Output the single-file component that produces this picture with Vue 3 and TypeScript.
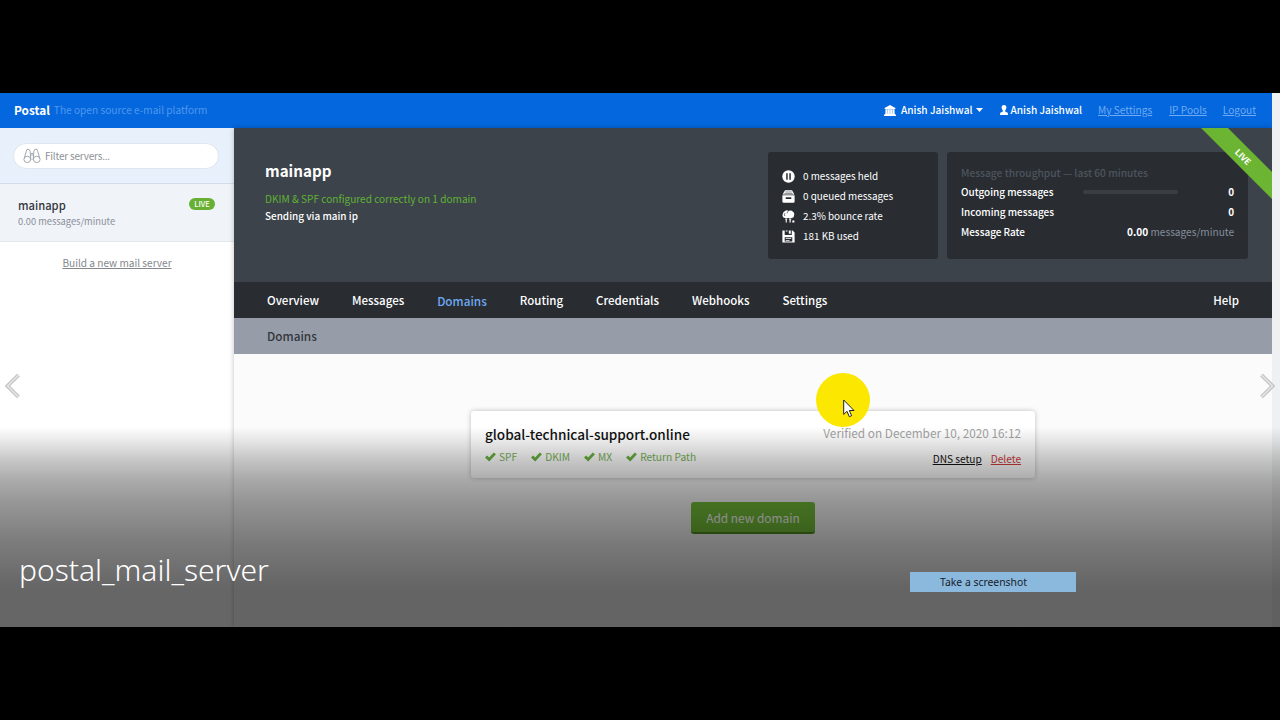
<script setup lang="ts">
const nav: { label: string; active?: boolean }[] = [
  { label: 'Overview' },
  { label: 'Messages' },
  { label: 'Domains', active: true },
  { label: 'Routing' },
  { label: 'Credentials' },
  { label: 'Webhooks' },
  { label: 'Settings' },
]
const checks: string[] = ['SPF', 'DKIM', 'MX', 'Return Path']
</script>

<template>
  <div class="screen">
    <div class="stage">
      <div class="app">
        <header class="topbar">
          <div class="brand"><b>Postal</b><span>The open source e-mail platform</span></div>
          <div class="user">
            <svg class="bank" viewBox="0 0 12 11" width="12" height="11"><path fill="#fff" d="M6 0L11.4 2.9V4H.6V2.9ZM1.6 4.5H3.2V8.3H1.6ZM4 4.5H5.5V8.3H4ZM6.4 4.5H7.9V8.3H6.4ZM8.8 4.5H10.4V8.3H8.8ZM1 8.6H11V9.4H12V11H0V9.4H1Z" /><path fill="#fff" opacity=".6" d="M1.5 4H10.5V9H1.5Z" /></svg>
            <span>Anish Jaishwal</span>
            <svg class="caret" viewBox="0 0 7 4" width="7" height="4"><path fill="#fff" d="M0 0H7L3.5 4Z" /></svg>
            <svg class="person" viewBox="0 0 8 10" width="8" height="10"><path fill="#fff" d="M4 0C5.6 0 6.5 1.1 6.4 2.6C6.3 3.8 5.8 4.7 5.3 5.2V6.8L7.4 7.6Q8 7.9 8 10H0Q0 7.9 .6 7.6L2.7 6.8V5.2C2.2 4.7 1.7 3.8 1.6 2.6C1.5 1.1 2.4 0 4 0Z" /></svg>
            <span>Anish Jaishwal</span>
            <a>My Settings</a>
            <a class="pools">IP Pools</a>
            <a>Logout</a>
          </div>
        </header>
        <div class="body">
          <aside class="side">
            <div class="search">
              <div class="field">
                <svg viewBox="0 0 18 16" width="18" height="16" fill="none" stroke="#a3a8ae" stroke-width="1"><path d="M3.3 3.2Q3.5 1.2 5 1.2T7.1 3.2L7.9 12M3.3 3.2L1.2 10.5M10.9 3.2Q11.1 1.2 12.8 1.2T14.7 3.2L16.8 10.5M10.9 3.2L10.1 12M8 5.5H10M8 7H10" /><ellipse cx="4.3" cy="11.4" rx="3.4" ry="3.1" /><ellipse cx="13.7" cy="11.4" rx="3.4" ry="3.1" /></svg>
                <span>Filter servers...</span>
              </div>
            </div>
            <div class="server">
              <div>
                <div class="sname">mainapp</div>
                <div class="srate">0.00 messages/minute</div>
              </div>
              <span class="badge">LIVE</span>
            </div>
            <a class="build">Build a new mail server</a>
          </aside>
          <main class="main">
            <section class="hero">
              <div class="info">
                <h1>mainapp</h1>
                <p class="ok">DKIM &amp; SPF configured correctly on 1 domain</p>
                <p class="via">Sending via main ip</p>
              </div>
              <div class="panel stats">
                <div class="stat">
                  <svg viewBox="0 0 13 13" width="13" height="13"><circle cx="6.5" cy="6.5" r="6.2" fill="#fff" /><path fill="#292d32" d="M4.2 3.3H5.7V9.7H4.2ZM7.3 3.3H8.8V9.7H7.3Z" /></svg>
                  <span>0 messages held</span>
                </div>
                <div class="stat">
                  <svg viewBox="0 0 13 13" width="13" height="13" fill="#fff"><path d="M3 .3H10L12.4 4.6H.6Z" /><path fill="#292d32" d="M3.2 1.7H9.8V2.3H3.2ZM2.4 3.2H10.6V3.8H2.4Z" /><path fill-rule="evenodd" d="M.4 5.2H12.6V11.5Q12.6 12.7 11.4 12.7H1.6Q.4 12.7 .4 11.5ZM3.7 7.3V8.9H9.3V7.3Z" /></svg>
                  <span>0 queued messages</span>
                </div>
                <div class="stat">
                  <svg viewBox="0 0 13 13" width="13" height="13" fill="#fff"><path d="M3 .9Q5 -.2 6.2 .9Q9.5 -.4 11 1.8Q12.9 3.2 12 5.5Q12 8 9.2 8H3.3Q.4 7.8 .5 4.8Q.8 2 3 .9Z" /><path d="M3.2 8.6H5.3V9.4H4.8V12.5H3.7V9.4H3.2ZM7 8.6H9.3V9.4H8.7V12.5H7.5V9.4H7ZM10.3 10.6H12.4V12.6H10.3Z" /><path fill="none" stroke="#292d32" stroke-width=".7" d="M2.8 3.2Q2 4.4 2.8 6M6.2 1.2Q5 2 5.2 3.2" /></svg>
                  <span>2.3% bounce rate</span>
                </div>
                <div class="stat">
                  <svg viewBox="0 0 13 13" width="13" height="13"><path fill="#fff" fill-rule="evenodd" d="M.4 .4H2.7V5H9.8V.4H10.6L12.6 2.4V12.6H.4ZM2.7 7.2V11.5H10.3V7.2Z" /><path fill="#fff" d="M6.8 .4H8.8V3.8H6.8ZM3.7 .4H5.5V1.4H3.7ZM3.7 8.3H9.2V9.1H3.7ZM3.7 9.9H7.5V10.7H3.7Z" /></svg>
                  <span>181 KB used</span>
                </div>
              </div>
              <div class="panel through">
                <div class="ttl">Message throughput — last 60 minutes</div>
                <div class="row"><span>Outgoing messages</span><i class="spark"></i><b>0</b></div>
                <div class="row"><span>Incoming messages</span><b>0</b></div>
                <div class="row"><span>Message Rate</span><span class="rate"><b>0.00</b> messages/minute</span></div>
              </div>
              <div class="ribbon">LIVE</div>
            </section>
            <nav class="nav">
              <a v-for="n in nav" :key="n.label" :class="{ active: n.active }">{{ n.label }}</a>
              <a class="help">Help</a>
            </nav>
            <div class="subnav"><span>Domains</span></div>
            <section class="content">
              <div class="card">
                <div>
                  <div class="domain">global-technical-support.online</div>
                  <div class="checks">
                    <span v-for="c in checks" :key="c" class="check"><svg viewBox="0 0 11 10" width="11" height="10"><path fill="#69b03f" d="M0 5.6L2.1 3.5L4.1 5.4L8.8 .4L11 2.3L4.2 9.6Z" /></svg>{{ c }}</span>
                  </div>
                </div>
                <div class="right">
                  <div class="verified">Verified on December 10, 2020 16:12</div>
                  <div class="links"><a class="dns">DNS setup</a><a class="del">Delete</a></div>
                </div>
              </div>
              <button class="add">Add new domain</button>
            </section>
          </main>
        </div>
      </div>
      <div class="strip"></div>
      <div class="halo"></div>
      <div class="shade"></div>
      <svg class="cursor" viewBox="0 0 12 19" width="12" height="19"><path d="M.7 1V15.4L4 12.3L6.3 17.7L8.6 16.7L6.3 11.5H11Z" fill="#fff" stroke="#222" stroke-width="1" /></svg>
      <svg class="arrow prev" viewBox="0 0 16 26" width="16" height="26" fill="none"><path d="M14.5 2L3.5 13L14.5 24" stroke="#bcbcbc" stroke-width="3.8" /><path d="M14.5 2L3.5 13L14.5 24" stroke="#e2e2e2" stroke-width="1.8" /></svg>
      <svg class="arrow next" viewBox="0 0 16 26" width="16" height="26" fill="none"><path d="M1.5 2L12.5 13L1.5 24" stroke="#bcbcbc" stroke-width="3.8" /><path d="M1.5 2L12.5 13L1.5 24" stroke="#e2e2e2" stroke-width="1.8" /></svg>
      <div class="caption">postal_mail_server</div>
      <div class="tip">Take a screenshot</div>
    </div>
  </div>
</template>

<style>
html, body { margin: 0; background: #000; overflow: hidden; }
</style>

<style scoped>
.screen { width: 1280px; height: 720px; background: #000; padding-top: 93px; font-family: "Noto Sans CJK SC", "Noto Sans", sans-serif; }
.screen *, .screen { box-sizing: border-box; }
.screen svg { display: block; flex: none; }
.stage { position: relative; width: 1280px; height: 534px; overflow: hidden; display: flex; background: #fafafa; white-space: nowrap; }
.app { width: 1272px; display: flex; flex-direction: column; }
.strip { width: 8px; background: #eff0f1; }
.topbar { height: 35px; background: #0467dd; display: flex; justify-content: space-between; align-items: center; padding: 0 16px 1px 14px; color: #fff; font-size: 10.15px; line-height: 34px; }
.brand { display: flex; gap: 4px; }
.brand b { font-size: 11.8px; }
.brand span { color: #4f97ee; }
.user { display: flex; align-items: center; font-weight: 500; }
.bank { margin-right: 5px; }
.caret { margin: 0 17px 0 3px; }
.person { margin-right: 3px; }
.user a { color: #6faaf3; text-decoration: underline; font-weight: 400; margin-left: 16px; }
.user .pools { margin-left: 17px; }
.body { flex: 1; display: flex; min-height: 0; }
.side { width: 234px; background: #fff; display: flex; flex-direction: column; }
.search { height: 56px; background: #e8f1fb; border-bottom: 1px solid #d0dce8; padding: 15px 15px 0 13px; }
.field { height: 26px; border-radius: 13px; border: 1px solid #e0e6ee; background: #fff; display: flex; align-items: center; gap: 4px; padding-left: 9px; color: #8d9197; font-size: 10px; letter-spacing: -.2px; line-height: 24px; }
.server { height: 58px; background: #f0f3f8; border-bottom: 1px solid #e4e9ee; display: flex; justify-content: space-between; padding: 12px 19px 0 18px; }
.sname { font-size: 11.2px; font-weight: 500; line-height: 18px; color: #33373c; }
.srate { font-size: 9.3px; line-height: 14px; color: #898f98; }
.badge { width: 26px; height: 12px; border-radius: 6px; margin-top: 2px; background: #67b034; color: #fff; font-size: 7.5px; font-weight: 500; line-height: 12px; text-align: center; }
.build { align-self: center; margin-top: 12px; color: #84878b; font-size: 10.1px; line-height: 18px; text-decoration: underline; }
.main { flex: 1; display: flex; flex-direction: column; box-shadow: 0 0 5px rgba(0, 0, 0, .25); background: #fbfbfb; }
.hero { position: relative; height: 154px; background: #3d434a; display: flex; padding: 24px 24px 0 31px; overflow: hidden; color: #fff; }
.info { flex: 1; padding-top: 4px; }
.info h1 { margin: 0; font-size: 15.2px; line-height: 28px; font-weight: 700; }
.info p { margin: 0; font-size: 10.1px; line-height: 17px; }
.info .ok { color: #5fb336; margin-top: 6px; }
.info .via { font-weight: 500; font-size: 9.95px; }
.panel { height: 107px; background: #292d32; border-radius: 3px; }
.stats { width: 170px; margin-right: 9px; padding: 14px 0 0 14px; }
.stat { display: flex; align-items: center; gap: 8px; height: 20px; font-size: 9.9px; line-height: 20px; }
.through { width: 301px; padding: 13px 14px 0; font-size: 9.95px; }
.ttl { line-height: 16px; color: #4d545d; font-weight: 500; font-size: 10.2px; margin-bottom: 1px; }
.row { height: 20px; display: flex; justify-content: space-between; align-items: center; line-height: 20px; font-weight: 500; }
.spark { width: 95px; height: 4px; border-radius: 2px; background: #3a3e44; margin-left: -20px; }
.rate { color: #858d99; font-weight: 400; font-size: 10.1px; }
.rate b { color: #fff; }
.ribbon { position: absolute; right: -37px; top: 15px; width: 140px; height: 19px; padding-left: 12px; background: #6bb533; transform: rotate(45deg); font-size: 8.5px; font-weight: 700; line-height: 19px; text-align: center; }
.nav { height: 36px; background: #292d32; display: flex; padding: 0 33px; color: #fff; font-size: 11.5px; font-weight: 500; line-height: 37px; gap: 33px; }
.nav .active { color: #6fa8f2; font-size: 11.75px; }
.nav .help { margin-left: auto; }
.subnav { height: 36px; background: #979da8; padding-left: 33px; font-size: 11.8px; font-weight: 500; line-height: 36px; color: #31363d; }
.content { flex: 1; display: flex; flex-direction: column; align-items: center; padding-top: 57px; }
.card { width: 564px; height: 67px; background: #fff; border-radius: 3px; box-shadow: 0 0 5px rgba(0, 0, 0, .25); display: flex; justify-content: space-between; padding: 11px 14px 0; }
.domain { font-size: 13.55px; font-weight: 500; line-height: 24px; color: #111; }
.checks { display: flex; gap: 14px; line-height: 20px; margin-top: 1px; font-size: 10.2px; color: #78b258; }
.check { display: flex; align-items: center; gap: 3px; }
.right { text-align: right; }
.verified { font-size: 11.8px; line-height: 22px; color: #a3a3a3; }
.links { display: flex; justify-content: flex-end; gap: 9px; font-size: 10.15px; line-height: 28px; padding-top: 1px; }
.dns { color: #111; text-decoration: underline; }
.del { color: #d23c3c; text-decoration: underline; }
.add { margin-top: 24px; width: 124px; height: 32px; border: 0; border-bottom: 2px solid #4b8c1d; border-radius: 3px; background: #74bf38; color: #fff; font-family: inherit; font-size: 11.9px; line-height: 30px; padding: 1px 0 0; }
.shade { position: absolute; left: 0; right: 0; top: 334px; bottom: 0; background: linear-gradient(rgba(0,0,0,0) 0, rgba(0,0,0,.1) 16px, rgba(0,0,0,.22) 33px, rgba(0,0,0,.33) 53px, rgba(0,0,0,.41) 76px, rgba(0,0,0,.51) 113px, rgba(0,0,0,.6) 160px); }
.halo { position: absolute; left: 816px; top: 280px; width: 54px; height: 54px; border-radius: 50%; background: #fbe700; }
.cursor { position: absolute; left: 843px; top: 306px; }
.arrow { position: absolute; top: 280px; }
.prev { left: 4px; }
.next { left: 1260px; }
.caption { position: absolute; left: 19px; top: 456px; font-family: "Noto Sans", "Open Sans", sans-serif; font-weight: 300; font-size: 30px; line-height: 42px; color: #fff; }
.tip { position: absolute; left: 910px; top: 479px; width: 166px; height: 20px; background: #8bb9de; padding-left: 30px; color: #16202a; font-family: "Noto Sans", sans-serif; font-size: 10.4px; line-height: 20px; }
</style>
